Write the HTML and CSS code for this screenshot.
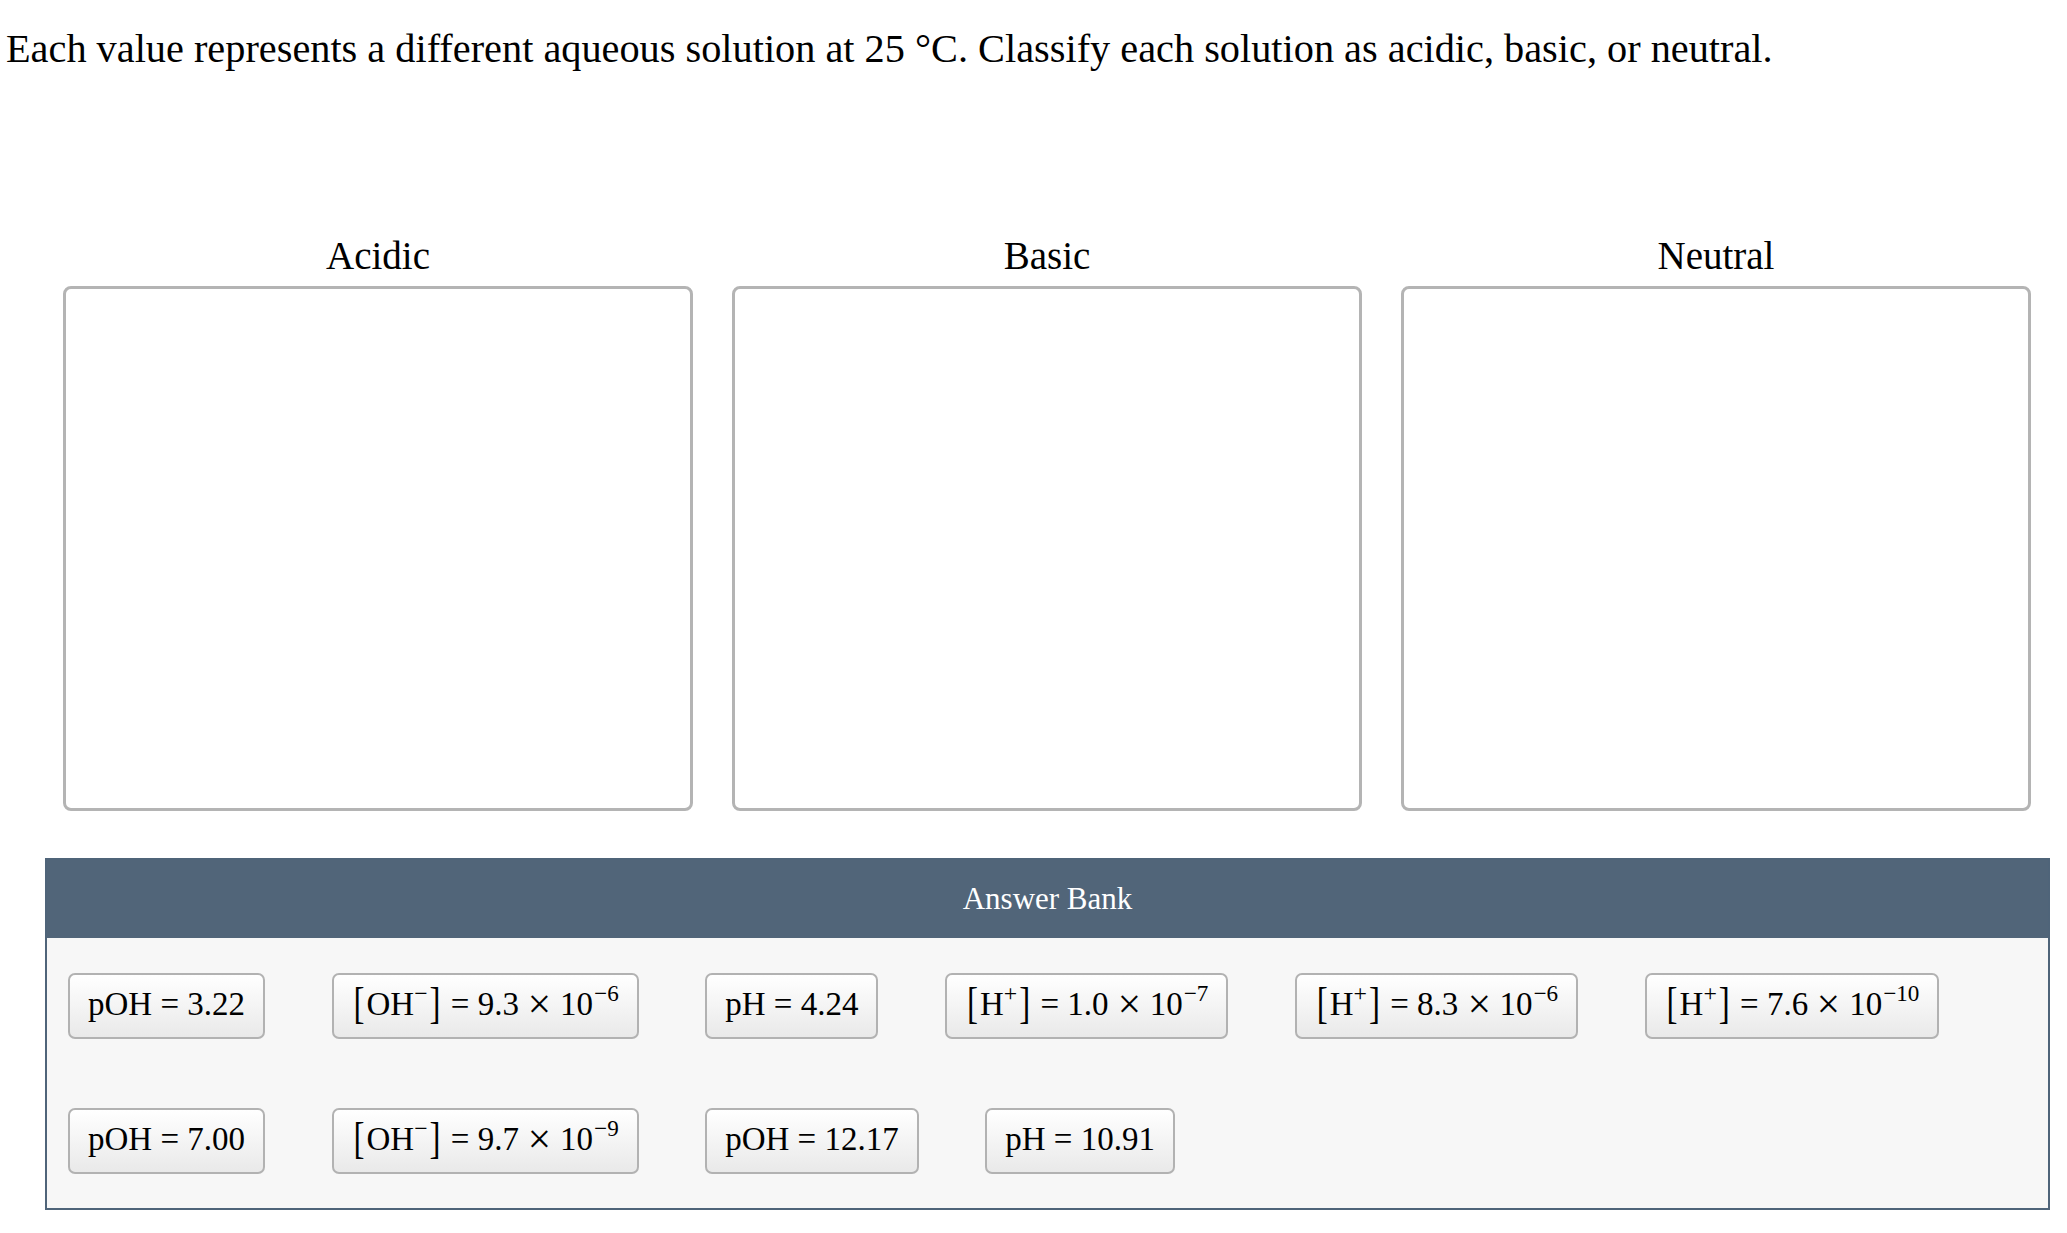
FILE: index.html
```html
<!DOCTYPE html>
<html>
<head>
<meta charset="utf-8">
<link rel="stylesheet" href="styles.css">
</head>
<body>
<div class="page">
  <p class="prompt">Each value represents a different aqueous solution at 25 °C. Classify each solution as acidic, basic, or neutral.</p>
  <div class="bins">
    <div class="bin">
      <div class="bin-label">Acidic</div>
      <div class="bin-box"></div>
    </div>
    <div class="bin">
      <div class="bin-label">Basic</div>
      <div class="bin-box"></div>
    </div>
    <div class="bin">
      <div class="bin-label">Neutral</div>
      <div class="bin-box"></div>
    </div>
  </div>
  <div class="bank">
    <div class="bank-head">Answer Bank</div>
    <div class="bank-body">
      <div class="tile"><span class="expr">pOH = 3.22</span></div>
      <div class="tile"><span class="expr"><span class="br">[</span>OH<sup class="ion">−</sup><span class="br">]</span> = 9.3 <span class="times">×</span> 10<sup>−6</sup></span></div>
      <div class="tile"><span class="expr">pH = 4.24</span></div>
      <div class="tile"><span class="expr"><span class="br">[</span>H<sup class="ion">+</sup><span class="br">]</span> = 1.0 <span class="times">×</span> 10<sup>−7</sup></span></div>
      <div class="tile"><span class="expr"><span class="br">[</span>H<sup class="ion">+</sup><span class="br">]</span> = 8.3 <span class="times">×</span> 10<sup>−6</sup></span></div>
      <div class="tile"><span class="expr"><span class="br">[</span>H<sup class="ion">+</sup><span class="br">]</span> = 7.6 <span class="times">×</span> 10<sup>−10</sup></span></div>
      <div class="tile"><span class="expr">pOH = 7.00</span></div>
      <div class="tile"><span class="expr"><span class="br">[</span>OH<sup class="ion">−</sup><span class="br">]</span> = 9.7 <span class="times">×</span> 10<sup>−9</sup></span></div>
      <div class="tile"><span class="expr">pOH = 12.17</span></div>
      <div class="tile"><span class="expr">pH = 10.91</span></div>
    </div>
  </div>
</div>
</body>
</html>
```

FILE: styles.css
```css
html, body {
  margin: 0;
  padding: 0;
  background: #ffffff;
}

body {
  font-family: "Liberation Serif", "Times New Roman", serif;
  color: #000000;
}

.page {
  width: 2067px;
}

.prompt {
  margin: 0;
  padding: 26px 0 0 6px;
  font-size: 40.3px;
  line-height: 46px;
}

.bins {
  display: flex;
  gap: 39px;
  padding-left: 63px;
  margin-top: 162px;
}

.bin {
  width: 630px;
  display: flex;
  flex-direction: column;
  align-items: center;
}

.bin-label {
  font-size: 39px;
  line-height: 44px;
  margin-bottom: 8px;
}

.bin-box {
  width: 100%;
  height: 525px;
  box-sizing: border-box;
  border: 3px solid #b4b4b4;
  border-radius: 8px;
  background: #ffffff;
}

.bank {
  margin: 47px 0 0 45px;
  width: 2005px;
  box-sizing: border-box;
  border: 2px solid #4f6479;
  background: #f7f7f7;
}

.bank-head {
  height: 78px;
  background: #516579;
  color: #ffffff;
  font-size: 31px;
  line-height: 78px;
  text-align: center;
}

.bank-body {
  display: flex;
  flex-wrap: wrap;
  column-gap: 66.5px;
  row-gap: 69px;
  padding: 35px 24px 34px 21px;
}

.tile {
  height: 66px;
  box-sizing: border-box;
  padding: 0 18px;
  border: 2px solid #b2b2b2;
  border-radius: 7px;
  background: linear-gradient(#ffffff, #e9e9e9);
  font-size: 33px;
  line-height: 58px;
  white-space: nowrap;
}

.expr {
  display: inline-block;
}

.tile sup {
  font-size: 0.7em;
  line-height: 0;
  position: relative;
  top: -0.6em;
  vertical-align: baseline;
  margin-left: 1px;
}

.tile sup.ion {
  font-size: 0.72em;
  margin-left: 0;
}

.times {
  display: inline-block;
  transform: scale(1.25);
  margin: 0 3px;
}

.br {
  display: inline-block;
  transform: scaleY(1.35);
  transform-origin: 50% 55%;
  margin: 0 2px;
}
```
